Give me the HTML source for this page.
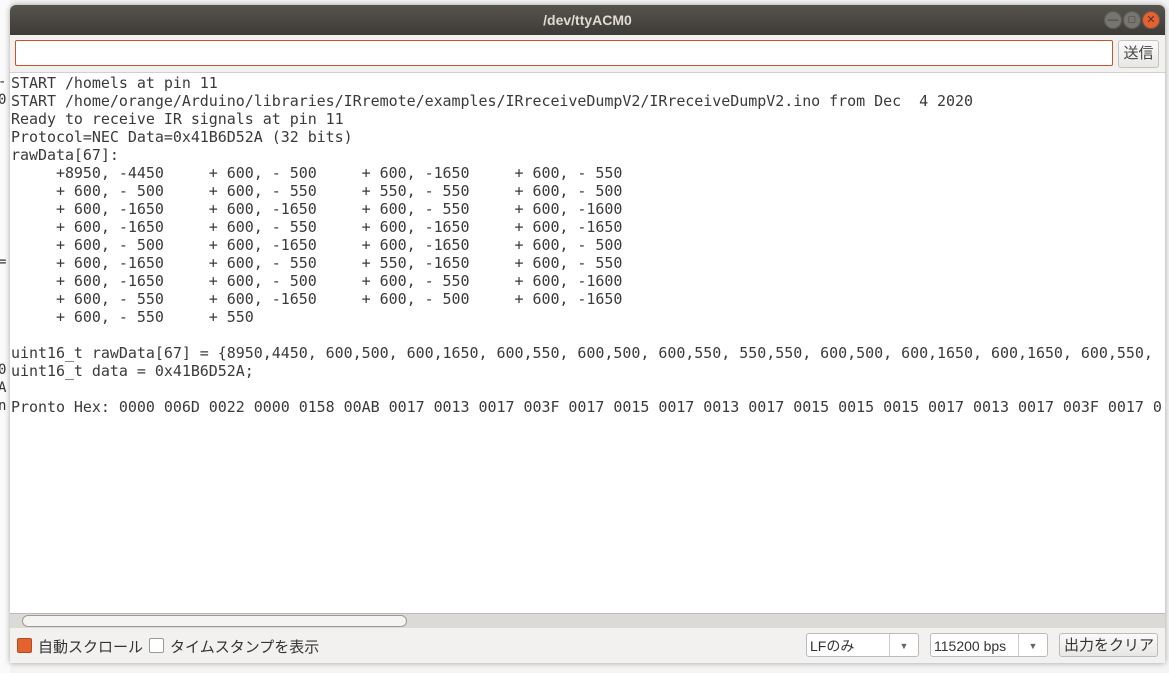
<!DOCTYPE html>
<html><head><meta charset="utf-8"><style>
body{margin:0;width:1169px;height:673px;background:#f4f4f4;position:relative;overflow:hidden;font-family:"Liberation Sans","Noto Sans CJK JP",sans-serif}
.bg{position:absolute;left:0;top:0;width:10px;height:673px;background:#fafafa;font:14px "DejaVu Sans Mono",monospace;color:#333}
.bg div{position:absolute;left:-2px}
.win{position:absolute;left:10px;top:5px;width:1155px;height:658px;background:#f2f1f0;box-shadow:0 0 6px rgba(0,0,0,.35);border-radius:6px 6px 0 0;overflow:hidden}
.title{height:30px;background:linear-gradient(#57544e,#3d3b37);color:#dfdbd2;font-weight:bold;font-size:14px;text-align:center;line-height:30px}
.btns{position:absolute;right:5px;top:6px;display:flex;gap:1px}
.btns span{width:18px;height:18px;border-radius:50%;background:#77756f;display:block;box-shadow:inset 0 0 0 1px #5a5853;position:relative}
.btns span.x{background:#e9602f}
.btns span b{position:absolute;left:0;top:0;width:18px;height:18px;color:#3c3b37;font-size:11px;line-height:18px;text-align:center;font-weight:normal}
.inp{position:absolute;left:5px;top:35px;width:1096px;height:24px;border:1px solid #c6552b;background:#fff;border-radius:2px}
.send{position:absolute;left:1108px;top:35px;width:39px;height:26px;border:1px solid #c4c2bd;border-radius:3px;background:linear-gradient(#fafafa,#e8e7e5);font-size:15px;color:#444;text-align:center;line-height:26px}
.ta{position:absolute;left:0;top:67px;width:1155px;height:541px;background:#fff;border-top:1px solid #d0d0d0}
pre{margin:0;position:absolute;left:1px;top:1px;font:15px/18px "DejaVu Sans Mono",monospace;letter-spacing:-0.04px;color:#3a3a3a;white-space:pre}
.sb{position:absolute;left:0;top:608px;width:1155px;height:14px;background:#dcdad6;border-top:1px solid #bbb}
.thumb{position:absolute;left:12px;top:1px;width:383px;height:10px;border:1px solid #9d9b97;border-radius:6px;background:#f5f4f2}
.bot{position:absolute;left:0;top:623px;width:1155px;height:35px;font-size:15px;color:#333}
.cb{position:absolute;top:10px;width:13px;height:13px;border:1px solid #999;border-radius:2px;background:#fff}
.sel{position:absolute;top:5px;height:24px;border:1px solid #bbb;border-radius:3px;background:#fff;font-size:14px;line-height:24px;padding-left:3px;box-sizing:border-box}
.sel i{position:absolute;right:0;top:0;width:28px;height:22px;border-left:1px solid #ccc;font-style:normal;font-size:9px;text-align:center;color:#666}
</style></head><body>
<div class="bg"><div style="top:74px">-</div><div style="top:92px">0</div><div style="top:254px">=</div><div style="top:362px">0</div><div style="top:380px">A</div><div style="top:398px">n</div></div>
<div class="win">
<div class="title">/dev/ttyACM0<div class="btns"><span><b>—</b></span><span><b>□</b></span><span class="x"><b>✕</b></span></div></div>
<div class="inp"></div><div class="send">送信</div>
<div class="ta"><pre>START /homels at pin 11
START /home/orange/Arduino/libraries/IRremote/examples/IRreceiveDumpV2/IRreceiveDumpV2.ino from Dec  4 2020
Ready to receive IR signals at pin 11
Protocol=NEC Data=0x41B6D52A (32 bits)
rawData[67]:
     +8950, -4450     + 600, - 500     + 600, -1650     + 600, - 550
     + 600, - 500     + 600, - 550     + 550, - 550     + 600, - 500
     + 600, -1650     + 600, -1650     + 600, - 550     + 600, -1600
     + 600, -1650     + 600, - 550     + 600, -1650     + 600, -1650
     + 600, - 500     + 600, -1650     + 600, -1650     + 600, - 500
     + 600, -1650     + 600, - 550     + 550, -1650     + 600, - 550
     + 600, -1650     + 600, - 500     + 600, - 550     + 600, -1600
     + 600, - 550     + 600, -1650     + 600, - 500     + 600, -1650
     + 600, - 550     + 550

uint16_t rawData[67] = {8950,4450, 600,500, 600,1650, 600,550, 600,500, 600,550, 550,550, 600,500, 600,1650, 600,1650, 600,550, 
uint16_t data = 0x41B6D52A;

Pronto Hex: 0000 006D 0022 0000 0158 00AB 0017 0013 0017 003F 0017 0015 0017 0013 0017 0015 0015 0015 0017 0013 0017 003F 0017 0</pre></div>
<div class="sb"><div class="thumb"></div></div>
<div class="bot">
<div class="cb" style="left:7px;background:#e2632f;border-color:#b84a20"></div>
<span style="position:absolute;left:28px;top:8px">自動スクロール</span>
<div class="cb" style="left:139px"></div>
<span style="position:absolute;left:160px;top:8px">タイムスタンプを表示</span>
<div class="sel" style="left:796px;width:113px">LFのみ<i>▼</i></div>
<div class="sel" style="left:920px;width:118px">115200 bps<i>▼</i></div>
<div class="sel" style="left:1049px;width:99px;background:linear-gradient(#fafafa,#e8e7e5);padding-left:4px;font-size:15px">出力をクリア</div>
</div>
</div>
</body></html>
